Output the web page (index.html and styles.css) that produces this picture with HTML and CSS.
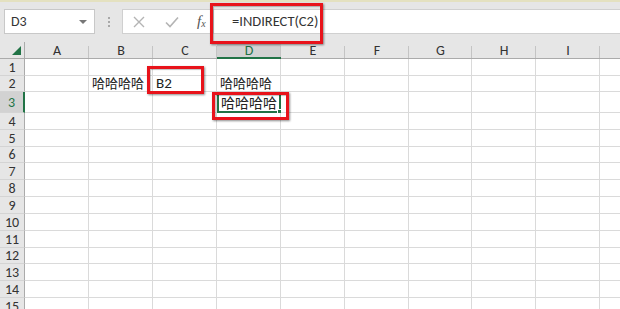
FILE: index.html
```html
<!DOCTYPE html>
<html lang="zh">
<head>
<meta charset="utf-8">
<link rel="stylesheet" href="styles.css">
</head>
<body>
<div class="app">
  <div class="topline"></div>
  <div class="toolbar">
    <div class="namebox"><span>D3</span><span class="dd"></span></div>
    <div class="grip"><i></i><i></i><i></i></div>
    <div class="btns">
      <svg class="ic" width="14" height="14" viewBox="0 0 14 14"><path d="M2 2L12 12M12 2L2 12" stroke="#b4b4b4" stroke-width="1.4" fill="none"/></svg>
      <svg class="ic" width="16" height="14" viewBox="0 0 16 14"><path d="M2 7.5L6 11.5L14 2.5" stroke="#b4b4b4" stroke-width="1.6" fill="none"/></svg>
      <span class="fx">f<sub>x</sub></span>
    </div>
    <div class="formula">=INDIRECT(C2)</div>
  </div>
  <div class="sheet">
    <div class="corner"><span class="tri"></span></div>
    <div class="ch">A</div><div class="ch">B</div><div class="ch">C</div><div class="ch sel">D</div><div class="ch">E</div><div class="ch">F</div><div class="ch">G</div><div class="ch">H</div><div class="ch">I</div><div class="ch"></div>

    <div class="rh">1</div><div class="c"></div><div class="c"></div><div class="c"></div><div class="c"></div><div class="c"></div><div class="c"></div><div class="c"></div><div class="c"></div><div class="c"></div><div class="c"></div>
    <div class="rh">2</div><div class="c"></div><div class="c cjk">哈哈哈哈</div><div class="c lat">B2</div><div class="c cjk">哈哈哈哈</div><div class="c"></div><div class="c"></div><div class="c"></div><div class="c"></div><div class="c"></div><div class="c"></div>
    <div class="rh rsel">3</div><div class="c"></div><div class="c"></div><div class="c"></div><div class="c cjk act">哈哈哈哈<span class="handle"></span></div><div class="c"></div><div class="c"></div><div class="c"></div><div class="c"></div><div class="c"></div><div class="c"></div>
    <div class="rh">4</div><div class="c"></div><div class="c"></div><div class="c"></div><div class="c"></div><div class="c"></div><div class="c"></div><div class="c"></div><div class="c"></div><div class="c"></div><div class="c"></div>
    <div class="rh">5</div><div class="c"></div><div class="c"></div><div class="c"></div><div class="c"></div><div class="c"></div><div class="c"></div><div class="c"></div><div class="c"></div><div class="c"></div><div class="c"></div>
    <div class="rh">6</div><div class="c"></div><div class="c"></div><div class="c"></div><div class="c"></div><div class="c"></div><div class="c"></div><div class="c"></div><div class="c"></div><div class="c"></div><div class="c"></div>
    <div class="rh">7</div><div class="c"></div><div class="c"></div><div class="c"></div><div class="c"></div><div class="c"></div><div class="c"></div><div class="c"></div><div class="c"></div><div class="c"></div><div class="c"></div>
    <div class="rh">8</div><div class="c"></div><div class="c"></div><div class="c"></div><div class="c"></div><div class="c"></div><div class="c"></div><div class="c"></div><div class="c"></div><div class="c"></div><div class="c"></div>
    <div class="rh">9</div><div class="c"></div><div class="c"></div><div class="c"></div><div class="c"></div><div class="c"></div><div class="c"></div><div class="c"></div><div class="c"></div><div class="c"></div><div class="c"></div>
    <div class="rh">10</div><div class="c"></div><div class="c"></div><div class="c"></div><div class="c"></div><div class="c"></div><div class="c"></div><div class="c"></div><div class="c"></div><div class="c"></div><div class="c"></div>
    <div class="rh">11</div><div class="c"></div><div class="c"></div><div class="c"></div><div class="c"></div><div class="c"></div><div class="c"></div><div class="c"></div><div class="c"></div><div class="c"></div><div class="c"></div>
    <div class="rh">12</div><div class="c"></div><div class="c"></div><div class="c"></div><div class="c"></div><div class="c"></div><div class="c"></div><div class="c"></div><div class="c"></div><div class="c"></div><div class="c"></div>
    <div class="rh">13</div><div class="c"></div><div class="c"></div><div class="c"></div><div class="c"></div><div class="c"></div><div class="c"></div><div class="c"></div><div class="c"></div><div class="c"></div><div class="c"></div>
    <div class="rh">14</div><div class="c"></div><div class="c"></div><div class="c"></div><div class="c"></div><div class="c"></div><div class="c"></div><div class="c"></div><div class="c"></div><div class="c"></div><div class="c"></div>
    <div class="rh">15</div><div class="c"></div><div class="c"></div><div class="c"></div><div class="c"></div><div class="c"></div><div class="c"></div><div class="c"></div><div class="c"></div><div class="c"></div><div class="c"></div>
  </div>
  <div class="mark mark-formula"></div>
  <div class="mark mark-c2"></div>
  <div class="mark mark-d3"></div>
</div>
</body>
</html>
```

FILE: styles.css
```css
* { box-sizing: border-box; }
html, body { margin: 0; padding: 0; }
body {
  width: 620px;
  height: 309px;
  overflow: hidden;
  background: #e6e6e6;
  font-family: Carlito, "Liberation Sans", Arial, sans-serif;
  color: #333;
}
.app { position: relative; width: 620px; height: 309px; overflow: hidden; }
.topline { height: 2px; background: #e4e1c0; }
.toolbar {
  height: 40px;
  display: flex;
  align-items: flex-start;
  padding-top: 7px;
  padding-left: 4px;
}
.namebox {
  width: 91px;
  height: 25px;
  background: #fff;
  border: 1px solid #c8c8c8;
  display: flex;
  align-items: center;
  justify-content: space-between;
  padding: 0 7px 0 6px;
  font-size: 14px;
  color: #333;
}
.dd {
  width: 0; height: 0;
  border-left: 4px solid transparent;
  border-right: 4px solid transparent;
  border-top: 4px solid #777;
}
.grip {
  width: 27px;
  height: 25px;
  display: flex;
  flex-direction: column;
  align-items: center;
  justify-content: center;
  gap: 2px;
}
.grip i { display: block; width: 2px; height: 2px; background: #a8a8a8; }
.btns {
  width: 89px;
  height: 25px;
  background: #fff;
  border: 1px solid #d0d0d0;
  display: flex;
  align-items: center;
  padding-left: 9px;
  gap: 18px;
}
.ic { display: block; }
.fx {
  font-family: "Liberation Serif", "Times New Roman", serif;
  font-style: italic;
  font-size: 15px;
  color: #555;
  margin-left: -1px;
}
.fx sub { font-size: 10px; vertical-align: -1px; }
.formula {
  flex: 1;
  height: 25px;
  margin-left: 2px;
  background: #fff;
  border: 1px solid #d0d0d0;
  border-right: none;
  font-size: 14.5px;
  line-height: 23px;
  padding-left: 18px;
  color: #333;
}
.sheet {
  display: grid;
  grid-template-columns: 25px 64px 64px 64px 64px 64px 64px 63px 64px 64px 40px;
  grid-template-rows: 17px 17px 16px 21px 17px 17px 16px 17px 17px 17px 17px 17px 16px 17px 17px 17px;
  background: #fff;
}
.corner {
  background: #e6e6e6;
  border-right: 1px solid #ababab;
  border-bottom: 1px solid #ababab;
  position: relative;
}
.tri {
  position: absolute;
  right: 3px;
  bottom: 3px;
  width: 0; height: 0;
  border-left: 9px solid transparent;
  border-bottom: 9px solid #217346;
}
.ch {
  background: #e6e6e6;
  border-bottom: 1px solid #ababab;
  position: relative;
  font-size: 14px;
  text-align: center;
  line-height: 17px;
  color: #333;
}
.ch::after {
  content: "";
  position: absolute;
  right: 0;
  top: 4px;
  bottom: 0;
  width: 1px;
  background: #c4c4c4;
}
.ch.sel {
  background: #d2d2d2;
  border-bottom: 2px solid #217346;
  color: #217346;
}
.rh {
  background: #e6e6e6;
  border-right: 1px solid #ababab;
  border-bottom: 1px solid #d4d4d4;
  font-size: 14px;
  text-align: center;
  display: flex;
  align-items: center;
  justify-content: center;
  color: #333;
}
.rh.rsel {
  background: #d2d2d2;
  border-right: 2px solid #217346;
  color: #217346;
}
.c {
  border-right: 1px solid #dadada;
  border-bottom: 1px solid #dadada;
  position: relative;
  white-space: nowrap;
  display: flex;
  align-items: flex-end;
  padding-left: 3px;
  padding-bottom: 0;
}
.cjk {
  font-family: "Noto Sans CJK SC", "Noto Sans", sans-serif;
  font-size: 13px;
  line-height: 16px;
  color: #222;
}
.lat {
  font-size: 15px;
  line-height: 16px;
  color: #222;
}
.act {
  outline: 2px solid #217346;
  outline-offset: -2px;
  font-size: 14px;
  padding-bottom: 2px;
  padding-left: 4px;
}
.handle {
  position: absolute;
  right: -2px;
  bottom: -2px;
  width: 5px;
  height: 5px;
  background: #217346;
  border: 1px solid #fff;
}
.mark {
  position: absolute;
  border: 3px solid #e8131b;
  box-shadow: 1px 1px 2px rgba(0,0,0,0.45), inset 1px 1px 1px rgba(0,0,0,0.25);
}
.mark-formula { left: 210px; top: 3px; width: 113px; height: 41px; }
.mark-c2 { left: 147px; top: 66px; width: 57px; height: 28px; }
.mark-d3 { left: 212px; top: 92px; width: 77px; height: 28px; }
```
